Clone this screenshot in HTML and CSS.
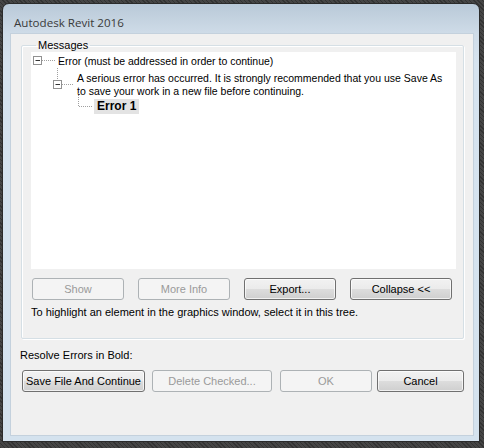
FILE: index.html
```html
<!DOCTYPE html>
<html>
<head>
<meta charset="utf-8">
<link rel="stylesheet" href="styles.css">
</head>
<body>
<div class="window">
  <div class="titlebar">Autodesk Revit 2016</div>
  <div class="client">
    <fieldset class="group">
      <legend class="legend">Messages</legend>
      <div class="tree">
        <div class="row row1">
          <svg class="conn" width="25" height="14" viewBox="0 0 25 14">
            <rect x="1.5" y="2.5" width="8" height="8" fill="#fff" stroke="#919191"/>
            <line x1="3.5" y1="6.5" x2="8" y2="6.5" stroke="#333"/>
            <line x1="10" y1="6.5" x2="23" y2="6.5" stroke="#a0a0a0" stroke-dasharray="1 1"/>
          </svg>
          <span class="label">Error (must be addressed in order to continue)</span>
        </div>
        <div class="row row2">
          <svg class="conn" width="24" height="27" viewBox="0 0 24 27" overflow="visible">
            <line x1="5.5" y1="-3" x2="5.5" y2="9" stroke="#a0a0a0" stroke-dasharray="1 1"/>
            <rect x="1.5" y="9.5" width="8" height="8" fill="#fff" stroke="#919191"/>
            <line x1="3.5" y1="13.5" x2="8" y2="13.5" stroke="#333"/>
            <line x1="10" y1="13.5" x2="22" y2="13.5" stroke="#a0a0a0" stroke-dasharray="1 1"/>
          </svg>
          <span class="label">A serious error has occurred. It is strongly recommended that you use Save As<br>to save your work in a new file before continuing.</span>
        </div>
        <div class="row row3">
          <svg class="conn" width="16" height="15" viewBox="0 0 16 15" overflow="visible">
            <line x1="0.5" y1="-6" x2="0.5" y2="7" stroke="#a0a0a0" stroke-dasharray="1 1"/>
            <line x1="1" y1="7.5" x2="15" y2="7.5" stroke="#a0a0a0" stroke-dasharray="1 1"/>
          </svg>
          <span class="label selected">Error 1</span>
        </div>
      </div>
      <div class="btnrow">
        <button class="btn disabled w92">Show</button>
        <button class="btn disabled w92">More Info</button>
        <button class="btn w92">Export...</button>
        <button class="btn w102">Collapse &lt;&lt;</button>
      </div>
      <div class="hint">To highlight an element in the graphics window, select it in this tree.</div>
    </fieldset>
    <div class="resolve">Resolve Errors in Bold:</div>
    <div class="bottomrow">
      <button class="btn w123">Save File And Continue</button>
      <button class="btn disabled w120">Delete Checked...</button>
      <button class="btn disabled w92">OK</button>
      <button class="btn w87">Cancel</button>
    </div>
  </div>
</div>
</body>
</html>
```
FILE: styles.css
```css
html, body {
  margin: 0;
  padding: 0;
}
body {
  width: 484px;
  height: 448px;
  overflow: hidden;
  background-color: #3a3a3a;
  background-image: repeating-linear-gradient(45deg, #333 0 1px, #454545 1px 3px);
  font-family: "Liberation Sans", Arial, sans-serif;
}
.window {
  box-sizing: border-box;
  margin: 3px 0 0 2px;
  width: 478px;
  height: 439px;
  border: 1px solid #2b2b2b;
  border-radius: 7px 7px 0 0;
  background: linear-gradient(#b9c9d8 0, #cfdce8 30px, #d6e3ef 60px, #d4e2ee 100%);
  display: flex;
  flex-direction: column;
}
.titlebar {
  height: 29px;
  padding-left: 11px;
  padding-top: 7px;
  display: flex;
  align-items: center;
  font-family: "Open Sans", sans-serif;
  font-size: 11.6px;
  color: #3a3a3a;
  box-sizing: border-box;
}
.client {
  margin: 0 5px 5px 7px;
  flex: 1;
  background: #f0f0f0;
  border: 1px solid #c4d1dd;
  display: flex;
  flex-direction: column;
  font-size: 11px;
  color: #000;
}
.group {
  margin: 5px 9px 0 10px;
  padding: 0 7px 0 9px;
  border: 1px solid #d5dfe5;
  border-radius: 2px;
  box-shadow: inset 1px 1px 0 #fff, 1px 1px 0 #fff;
  height: 300px;
  box-sizing: border-box;
  min-width: 0;
}
.legend {
  margin-left: 5px;
  padding: 0 2px;
  font-size: 11px;
  line-height: 13px;
}
.tree {
  background: #fff;
  height: 217px;
  margin-top: 0;
  padding-top: 2px;
  box-sizing: border-box;
  font-size: 10.5px;
}
.row {
  display: flex;
  align-items: center;
}
.row1 {
  padding-left: 1px;
  height: 14px;
}
.row1 .label { margin-left: 1px; }
.row2 {
  margin-top: 3px;
  padding-left: 21px;
  height: 27px;
}
.row2 .label {
  margin-left: 1px;
  line-height: 13px;
}
.row3 {
  margin-top: 1px;
  padding-left: 47px;
  height: 15px;
}
.selected {
  background: #e3e3e3;
  font-weight: bold;
  font-size: 12px;
  padding: 1px 3px;
  line-height: 13px;
}
.btnrow {
  display: flex;
  margin-top: 9px;
  margin-left: 1px;
  gap: 14px;
}
.btn {
  box-sizing: border-box;
  height: 22px;
  font-family: "Liberation Sans", Arial, sans-serif;
  font-size: 11px;
  color: #000;
  border: 1px solid #707070;
  border-radius: 3px;
  background: linear-gradient(#f2f2f2 0, #ebebeb 50%, #dddddd 50%, #cfcfcf 100%);
  padding: 0;
  margin: 0;
  box-shadow: inset 0 0 0 1px rgba(255,255,255,0.7);
}
.btn.disabled {
  border-color: #adb2b5;
  background: #f4f4f4;
  color: #9a9a9a;
  box-shadow: none;
}
.w92 { width: 92px; }
.w102 { width: 102px; }
.w123 { width: 123px; }
.w120 { width: 120px; }
.w87 { width: 87px; }
.hint {
  margin-top: 5px;
  line-height: 14px;
}
.resolve {
  margin: 9px 0 0 9px;
  line-height: 14px;
}
.bottomrow {
  display: flex;
  margin: 8px 0 0 11px;
  gap: 7px;
}
.bottomrow .btn:nth-child(3) { margin-left: 1px; }
.bottomrow .btn:nth-child(4) { margin-left: -2px; }
```
